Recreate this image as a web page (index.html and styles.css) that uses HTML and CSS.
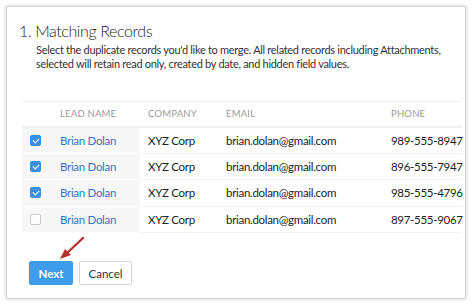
FILE: index.html
```html
<!DOCTYPE html>
<html lang="en">
<head>
  <meta charset="UTF-8" />
  <title>Merge Duplicates</title>
  <link rel="stylesheet" href="styles.css">
</head>
<body>
  <div class="card">
    <h1>1. Matching Records</h1>
    <p class="desc">Select the duplicate records you'd like to merge. All related records including Attachments,<br>selected will retain read only, created by date, and hidden field values.</p>

    <table class="records">
      <thead>
        <tr>
          <th class="col-check"></th>
          <th class="col-name">LEAD NAME</th>
          <th class="col-company">COMPANY</th>
          <th class="col-email">EMAIL</th>
          <th class="col-phone">PHONE</th>
        </tr>
      </thead>
      <tbody>
        <tr>
          <td class="col-check"><span class="check on"></span></td>
          <td class="col-name"><a href="#">Brian Dolan</a></td>
          <td>XYZ Corp</td>
          <td>brian.dolan@gmail.com</td>
          <td>989-555-8947</td>
        </tr>
        <tr>
          <td class="col-check"><span class="check on"></span></td>
          <td class="col-name"><a href="#">Brian Dolan</a></td>
          <td>XYZ Corp</td>
          <td>brian.dolan@gmail.com</td>
          <td>896-555-7947</td>
        </tr>
        <tr>
          <td class="col-check"><span class="check on"></span></td>
          <td class="col-name"><a href="#">Brian Dolan</a></td>
          <td>XYZ Corp</td>
          <td>brian.dolan@gmail.com</td>
          <td>985-555-4796</td>
        </tr>
        <tr>
          <td class="col-check"><span class="check"></span></td>
          <td class="col-name"><a href="#">Brian Dolan</a></td>
          <td>XYZ Corp</td>
          <td>brian.dolan@gmail.com</td>
          <td>897-555-9067</td>
        </tr>
      </tbody>
    </table>

    <div class="actions">
      <button class="btn primary">Next</button>
      <button class="btn">Cancel</button>
      <svg class="pointer" width="30" height="28" viewBox="0 0 30 28">
        <line x1="26" y1="1" x2="9" y2="17" stroke="#b8302a" stroke-width="2.4" stroke-linecap="round"/>
        <polygon points="3,22 8,12 14,18" fill="#b8302a"/>
      </svg>
    </div>
  </div>
</body>
</html>
```

FILE: styles.css
```css
* {
  box-sizing: border-box;
}

body {
  margin: 0;
  background: #fff;
  font-family: 'Lato', 'Open Sans', sans-serif;
  color: #222;
}

.card {
  margin: 6px;
  width: 460px;
  height: 293px;
  overflow: hidden;
  background: #fff;
  border: 1px solid #d4d4d4;
  box-shadow: 0 0 3px rgba(0, 0, 0, 0.25);
  padding: 14px 0 0 12px;
}

h1 {
  margin: 0;
  font-size: 16px;
  font-weight: 300;
  letter-spacing: -0.4px;
  line-height: 20px;
  color: #222;
}

.desc {
  margin: 2px 0 0 17px;
  font-size: 11px;
  letter-spacing: -0.3px;
  line-height: 14px;
  white-space: nowrap;
  color: #333;
}

.records {
  margin: 30px 0 0 3px;
  width: 440px;
  table-layout: fixed;
  border-collapse: collapse;
  font-size: 11.5px;
  letter-spacing: -0.3px;
  border-top: 1px solid #f0f0f0;
}

.records th {
  height: 25px;
  text-align: left;
  font-size: 9.5px;
  font-weight: 400;
  color: #9a9a9a;
  letter-spacing: 0.2px;
  border-bottom: 2px solid #f0f0f0;
}

.records td {
  height: 26.5px;
  border-bottom: 1px solid #f2f2f2;
  white-space: nowrap;
}

.records tbody .col-check,
.records tbody .col-name {
  background: #f7f7f8;
  border-bottom-color: #fff;
}

.col-check {
  width: 30px;
  padding-left: 8px;
}

.col-name {
  width: 88px;
  padding-left: 8px;
}

.col-company {
  width: 78px;
}

.col-email {
  width: 165px;
}

.records td:nth-child(n+3),
.records th:nth-child(n+3) {
  padding-left: 8px;
}

.records a {
  color: #3a74c0;
  text-decoration: none;
}

.check {
  display: block;
  width: 11px;
  height: 11px;
  border: 1px solid #c9c9c9;
  border-radius: 2px;
  background: #fff;
  position: relative;
}

.check.on {
  background: #3b8fe4;
  border-color: #3b8fe4;
}

.check.on::after {
  content: '';
  position: absolute;
  left: 3px;
  top: 1px;
  width: 3px;
  height: 5px;
  border: solid #fff;
  border-width: 0 1.5px 1.5px 0;
  transform: rotate(45deg);
}

.actions {
  position: relative;
  display: flex;
  gap: 6px;
  margin: 28px 0 0 10px;
}

.btn {
  height: 24px;
  width: 53px;
  padding: 0;
  font-family: inherit;
  font-size: 11.5px;
  background: #fff;
  border: 1px solid #d6d6d6;
  border-radius: 2px;
  color: #333;
}

.btn.primary {
  width: 44px;
  background: #3d9ceb;
  border-color: #3d9ceb;
  color: #fff;
  font-weight: 700;
}

.pointer {
  position: absolute;
  left: 28px;
  top: -24px;
}
```
